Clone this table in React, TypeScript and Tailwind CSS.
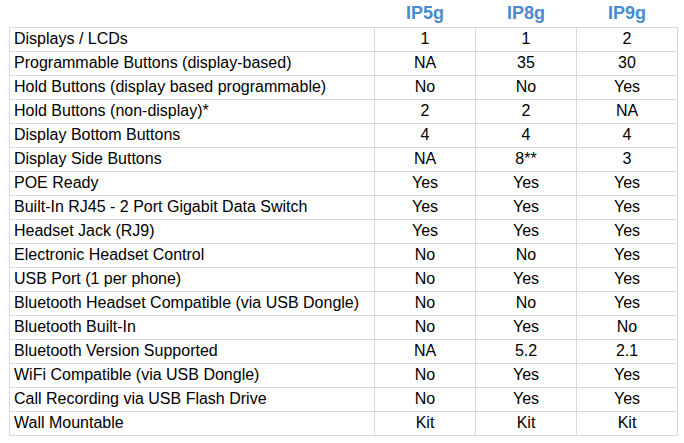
import React from 'react'

// feature comparison rows
const rows: [string, string, string, string][] = [
  ["Displays / LCDs", "1", "1", "2"],
  ["Programmable Buttons (display-based)", "NA", "35", "30"],
  ["Hold Buttons (display based programmable)", "No", "No", "Yes"],
  ["Hold Buttons (non-display)*", "2", "2", "NA"],
  ["Display Bottom Buttons", "4", "4", "4"],
  ["Display Side Buttons", "NA", "8**", "3"],
  ["POE Ready", "Yes", "Yes", "Yes"],
  ["Built-In RJ45 - 2 Port Gigabit Data Switch", "Yes", "Yes", "Yes"],
  ["Headset Jack (RJ9)", "Yes", "Yes", "Yes"],
  ["Electronic Headset Control", "No", "No", "Yes"],
  ["USB Port (1 per phone)", "No", "Yes", "Yes"],
  ["Bluetooth Headset Compatible (via USB Dongle)", "No", "No", "Yes"],
  ["Bluetooth Built-In", "No", "Yes", "No"],
  ["Bluetooth Version Supported", "NA", "5.2", "2.1"],
  ["WiFi Compatible (via USB Dongle)", "No", "Yes", "Yes"],
  ["Call Recording via USB Flash Drive", "No", "Yes", "Yes"],
  ["Wall Mountable", "Kit", "Kit", "Kit"],
];

const models = ["IP5g", "IP8g", "IP9g"];

export default function App() {
  return (
    <div className="w-[684px] h-[443px] bg-white pl-[9px] font-['Liberation_Sans',Arial,sans-serif] text-black">
      <table className="border-collapse table-fixed w-[669px]">
        <colgroup>
          <col className="w-[365px]" />
          <col className="w-[101px]" />
          <col className="w-[101px]" />
          <col className="w-[101px]" />
        </colgroup>
        <thead>
          <tr className="h-[27px]">
            <th className="p-0" />
            {models.map(m => (
              <th key={m} className="p-0 pb-[1px] text-[18px] leading-[20px] font-bold text-[#4a8bd0] text-center align-middle">
                {m}
              </th>
            ))}
          </tr>
        </thead>
        <tbody>
          {rows.map(r => (
            <tr key={r[0]} className="h-[24px]">
              <td className="border border-[#d9d9d9] px-[4px] py-0 text-[16px] leading-[18px]">{r[0]}</td>
              <td className="border border-[#d9d9d9] py-0 text-center text-[16px] leading-[18px]">{r[1]}</td>
              <td className="border border-[#d9d9d9] py-0 text-center text-[16px] leading-[18px]">{r[2]}</td>
              <td className="border border-[#d9d9d9] py-0 text-center text-[16px] leading-[18px]">{r[3]}</td>
            </tr>
          ))}
        </tbody>
      </table>
    </div>
  )
}
